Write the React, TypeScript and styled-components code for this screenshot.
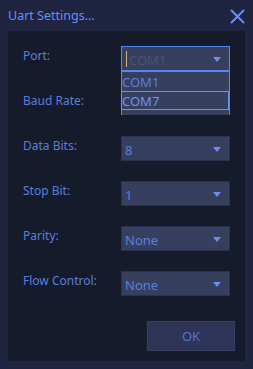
import React from 'react';
import styled, { createGlobalStyle } from 'styled-components';

const GlobalStyle = createGlobalStyle`
  html, body {
    margin: 0;
    padding: 0;
    background: #1f2441;
  }
  body {
    font-family: "Noto Sans", "Open Sans", sans-serif;
  }
`;

const Window = styled.div`
  width: 253px;
  height: 369px;
  background: #1f2441;
  display: flex;
  flex-direction: column;
  box-sizing: border-box;
  padding: 0 8px 8px 8px;
`;

const TitleBar = styled.div`
  height: 31px;
  display: flex;
  align-items: center;
  justify-content: space-between;
`;

const Title = styled.span`
  color: #6a8ff0;
  font-size: 12.5px;
  line-height: 16px;
  margin-top: 0;
`;

const CloseButton = styled.div`
  width: 16px;
  height: 16px;
  display: flex;
  align-items: center;
  justify-content: center;
  margin-top: 1px;
`;

const Panel = styled.div`
  flex: 1;
  background: #161b2b;
  padding: 15px 10px 10px 15px;
  display: flex;
  flex-direction: column;
  box-sizing: border-box;
`;

const Form = styled.div`
  display: flex;
  flex-direction: column;
  gap: 20px;
`;

const Row = styled.div`
  display: flex;
  align-items: flex-start;
  position: relative;
  height: 25px;
`;

const Label = styled.div`
  width: 98px;
  color: #5b7fd9;
  font-size: 12px;
  line-height: 16px;
  padding-top: 2px;
`;

const Combo = styled.div<{ $focused?: boolean }>`
  width: 109px;
  height: 25px;
  box-sizing: border-box;
  background: #373f5f;
  border: 1px solid ${p => (p.$focused ? '#5585f0' : '#2b3150')};
  display: flex;
  align-items: center;
  padding: 0 8px 0 3px;
  color: #5b7fd9;
  font-size: 13px;
`;

const Value = styled.span<{ $muted?: boolean }>`
  flex: 1;
  color: ${p => (p.$muted ? '#4a5272' : '#5b7fd9')};
  display: flex;
  align-items: center;
  padding-top: 2px;
`;

const Caret = styled.span`
  width: 1px;
  height: 16px;
  background: #c8b274;
  margin: -2px 2px 0 1px;
`;

const Arrow = styled.span`
  width: 0;
  height: 0;
  border-left: 4px solid transparent;
  border-right: 4px solid transparent;
  border-top: 5px solid #6a8ff0;
  margin-top: 2px;
`;

const Dropdown = styled.div`
  position: absolute;
  left: 98px;
  top: 25px;
  width: 109px;
  height: 44px;
  box-sizing: border-box;
  background: #373f5f;
  border: 1px solid #5585f0;
  border-bottom: none;
  padding-bottom: 5px;
  display: flex;
  flex-direction: column;
  z-index: 2;
`;

const Option = styled.div<{ $active?: boolean }>`
  height: 19px;
  box-sizing: border-box;
  display: flex;
  align-items: center;
  font-size: 13px;
  color: ${p => (p.$active ? '#6a95f5' : '#5b7fd9')};
  border: 1px solid ${p => (p.$active ? '#6a95f5' : 'transparent')};
  margin-left: -1px;
  width: 108px;
`;

const Footer = styled.div`
  margin-top: auto;
  display: flex;
  justify-content: flex-end;
`;

const OkButton = styled.button`
  width: 88px;
  height: 30px;
  background: #2d3455;
  border: 1px solid #363d60;
  color: #5672cc;
  font-family: "Noto Sans", "Open Sans", sans-serif;
  font-size: 13px;
  padding: 0;
`;

const fields = [
  { label: 'Data Bits:', value: '8' },
  { label: 'Stop Bit:', value: '1' },
  { label: 'Parity:', value: 'None' },
  { label: 'Flow Control:', value: 'None' },
];

export default function App() {
  return (
    <>
      <GlobalStyle />
      <Window>
        <TitleBar>
          <Title>Uart Settings...</Title>
          <CloseButton>
            <svg width="15" height="15" viewBox="0 0 15 15">
              <path d="M1 1L14 14M14 1L1 14" stroke="#6a8ff0" strokeWidth="2" />
            </svg>
          </CloseButton>
        </TitleBar>
        <Panel>
          <Form>
            <Row>
              <Label>Port:</Label>
              <Combo $focused>
                <Value $muted>
                  <Caret />
                  COM1
                </Value>
                <Arrow />
              </Combo>
              <Dropdown>
                <Option>COM1</Option>
                <Option $active>COM7</Option>
              </Dropdown>
            </Row>
            <Row>
              <Label>Baud Rate:</Label>
            </Row>
            {fields.map(f => (
              <Row key={f.label}>
                <Label>{f.label}</Label>
                <Combo>
                  <Value>{f.value}</Value>
                  <Arrow />
                </Combo>
              </Row>
            ))}
          </Form>
          <Footer>
            <OkButton>OK</OkButton>
          </Footer>
        </Panel>
      </Window>
    </>
  );
}
